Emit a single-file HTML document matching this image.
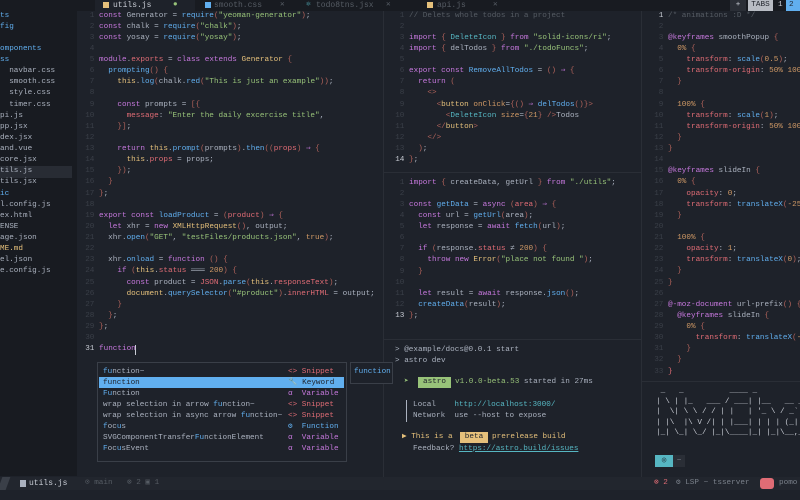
<!DOCTYPE html>
<html><head><meta charset="utf-8"><style>
*{margin:0;padding:0;box-sizing:border-box}
body{width:800px;height:500px;overflow:hidden;background:#1e222a;font-family:"Liberation Mono","DejaVu Sans Mono",monospace;font-size:7.67px;color:#abb2bf;position:relative}
.a{position:absolute;line-height:11px;white-space:nowrap}
pre{position:absolute;font:inherit;line-height:11.13px;white-space:pre}
.k{color:#c678dd}.f{color:#61afef}.s{color:#98c379}.r{color:#e06c75}.o{color:#d19a66}.y{color:#e5c07b}.c{color:#56b6c2}.p{color:#b0625a}.g{color:#565c64}.n{color:#3a3f48}.w{color:#c8ccd4}.b{color:#61afef}
.side{left:0;top:0;width:77px;height:476px;background:#181b21}
.clip{position:absolute;overflow:hidden}
</style></head><body>
<div class="a side"></div>
<div class="a" style="left:0;top:166px;width:72px;height:12px;background:#282c34"></div>
<pre style="left:0;top:10.5px;color:#abb2bf"><span class="b">ts
fig</span>

<span class="b">omponents
ss</span>
  navbar.css
  smooth.css
  style.css
  timer.css
pi.js
pp.jsx
dex.jsx
and.vue
core.jsx
tils.js
tils.jsx
<span class="b">ic</span>
l.config.js
ex.html
ENSE
age.json
<span class="y">ME.md</span>
el.json
e.config.js</pre>
<!-- tabline -->
<div class="a" style="left:77px;top:0;width:723px;height:11px;background:#181b21"></div>
<div class="a" style="left:95px;top:0;width:100px;height:11px;background:#1e222a"></div>
<div class="a" style="left:103px;top:2px;width:6px;height:6px;background:#e5c07b"></div>
<div class="a w" style="left:113px;top:0;font-size:8px">utils.js</div>
<div class="a s" style="left:173px;top:0">●</div>
<div class="a" style="left:205px;top:2px;width:6px;height:6px;background:#61afef"></div>
<div class="a g" style="left:214px;top:0;font-size:8px">smooth.css</div>
<div class="a g" style="left:280px;top:0">✕</div>
<div class="a c" style="left:306px;top:0">⚛</div>
<div class="a g" style="left:316px;top:0;font-size:8px">todo8tns.jsx</div>
<div class="a g" style="left:386px;top:0">✕</div>
<div class="a" style="left:427px;top:2px;width:6px;height:6px;background:#e5c07b"></div>
<div class="a g" style="left:437px;top:0;font-size:8px">api.js</div>
<div class="a g" style="left:493px;top:0">✕</div>
<div class="a" style="left:730px;top:0;width:16px;height:11px;background:#2a2e36;color:#c8ccd4;text-align:center">+</div>
<div class="a" style="left:748px;top:0;width:25px;height:11px;background:#b8bcc4;color:#1e222a;text-align:center">TABS</div>
<div class="a w" style="left:778px;top:0">1</div>
<div class="a" style="left:786px;top:0;width:14px;height:11px;background:#61afef;color:#1e222a;padding-left:3px">2</div>
<!-- splits -->
<div class="a" style="left:383px;top:11px;width:1px;height:466px;background:#2a2e36"></div>
<div class="a" style="left:641px;top:11px;width:1px;height:466px;background:#2a2e36"></div>
<div class="a" style="left:384px;top:172px;width:257px;height:1px;background:#2a2e36"></div>
<div class="a" style="left:384px;top:339px;width:257px;height:1px;background:#2a2e36"></div>
<div class="a" style="left:642px;top:381px;width:158px;height:1px;background:#2a2e36"></div>
<!-- main code -->
<pre style="left:80.6px;top:10.5px"><span class="n">  1</span> <span class="k">const</span> Generator = <span class="f">require</span><span class="p">(</span><span class="s">"yeoman-generator"</span><span class="p">)</span>;
<span class="n">  2</span> <span class="k">const</span> chalk = <span class="f">require</span><span class="p">(</span><span class="s">"chalk"</span><span class="p">)</span>;
<span class="n">  3</span> <span class="k">const</span> yosay = <span class="f">require</span><span class="p">(</span><span class="s">"yosay"</span><span class="p">)</span>;
<span class="n">  4</span>
<span class="n">  5</span> <span class="k">module</span>.<span class="r">exports</span> = <span class="k">class extends</span> <span class="y">Generator</span> <span class="p">{</span>
<span class="n">  6</span>   <span class="f">prompting</span><span class="p">()</span> <span class="p">{</span>
<span class="n">  7</span>     <span class="y">this</span>.<span class="f">log</span><span class="p">(</span>chalk.<span class="f">red</span><span class="p">(</span><span class="s">"This is just an example"</span><span class="p">))</span>;
<span class="n">  8</span>
<span class="n">  9</span>     <span class="k">const</span> prompts = <span class="p">[{</span>
<span class="n"> 10</span>       <span class="r">message</span>: <span class="s">"Enter the daily excercise title"</span>,
<span class="n"> 11</span>     <span class="p">}]</span>;
<span class="n"> 12</span>
<span class="n"> 13</span>     <span class="k">return</span> <span class="y">this</span>.<span class="f">prompt</span><span class="p">(</span>prompts<span class="p">)</span>.<span class="f">then</span><span class="p">((</span><span class="r">props</span><span class="p">)</span> <span class="k">⇒</span> <span class="p">{</span>
<span class="n"> 14</span>       <span class="y">this</span>.<span class="r">props</span> = props;
<span class="n"> 15</span>     <span class="p">})</span>;
<span class="n"> 16</span>   <span class="p">}</span>
<span class="n"> 17</span> <span class="p">}</span>;
<span class="n"> 18</span>
<span class="n"> 19</span> <span class="k">export const</span> <span class="f">loadProduct</span> = <span class="p">(</span><span class="r">product</span><span class="p">)</span> <span class="k">⇒</span> <span class="p">{</span>
<span class="n"> 20</span>   <span class="k">let</span> xhr = <span class="k">new</span> <span class="y">XMLHttpRequest</span><span class="p">()</span>, output;
<span class="n"> 21</span>   xhr.<span class="f">open</span><span class="p">(</span><span class="s">"GET"</span>, <span class="s">"testFiles/products.json"</span>, <span class="o">true</span><span class="p">)</span>;
<span class="n"> 22</span>
<span class="n"> 23</span>   xhr.<span class="f">onload</span> = <span class="k">function</span> <span class="p">()</span> <span class="p">{</span>
<span class="n"> 24</span>     <span class="k">if</span> <span class="p">(</span><span class="y">this</span>.<span class="r">status</span> ═══ <span class="o">200</span><span class="p">)</span> <span class="p">{</span>
<span class="n"> 25</span>       <span class="k">const</span> product = <span class="r">JSON</span>.<span class="f">parse</span><span class="p">(</span><span class="y">this</span>.<span class="r">responseText</span><span class="p">)</span>;
<span class="n"> 26</span>       <span class="y">document</span>.<span class="f">querySelector</span><span class="p">(</span><span class="s">"#product"</span><span class="p">)</span>.<span class="r">innerHTML</span> = output;
<span class="n"> 27</span>     <span class="p">}</span>
<span class="n"> 28</span>   <span class="p">}</span>;
<span class="n"> 29</span> <span class="p">}</span>;
<span class="n"> 30</span>
<span class="w"> 31</span> <span class="k">function</span></pre>
<div class="a" style="left:135px;top:345px;width:1px;height:10px;background:#c8ccd4"></div>
<!-- completion -->
<div class="a" style="left:97px;top:362px;width:250px;height:100px;border:1px solid #3a3f48;background:#1e222a"></div>
<div class="a" style="left:99px;top:377px;width:245px;height:11px;background:#61afef"></div>
<pre style="left:103px;top:366.5px"><span class="b">fu</span>nction~
<span style="color:#1e222a">function</span>
<span class="b">Fu</span>nction
wrap selection in arrow <span class="b">fu</span>nction~
wrap selection in async arrow <span class="b">fu</span>nction~
<span class="b">f</span>oc<span class="b">u</span>s
SVGComponentTransfer<span class="b">Fu</span>nctionElement
<span class="b">F</span>oc<span class="b">u</span>sEvent</pre>
<pre style="left:288px;top:366.5px"><span class="r">&lt;&gt; Snippet</span>
<span style="color:#1e222a">🔧 Keyword</span>
<span class="k">α  Variable</span>
<span class="r">&lt;&gt; Snippet</span>
<span class="r">&lt;&gt; Snippet</span>
<span class="f">⚙  Function</span>
<span class="k">α  Variable</span>
<span class="k">α  Variable</span></pre>
<div class="a f" style="left:350px;top:362px;width:43px;height:22px;border:1px solid #3a3f48;background:#1e222a;padding:4px 0 0 3px">function</div>
<!-- mid top -->
<pre style="left:395.2px;top:10.5px"><span class="n"> 1</span> <span class="g">// Delets whole todos in a project</span>
<span class="n"> 2</span>
<span class="n"> 3</span> <span class="k">import</span> <span class="p">{</span> <span class="c">DeleteIcon</span> <span class="p">}</span> <span class="k">from</span> <span class="s">"solid-icons/ri"</span>;
<span class="n"> 4</span> <span class="k">import</span> <span class="p">{</span> delTodos <span class="p">}</span> <span class="k">from</span> <span class="s">"./todoFuncs"</span>;
<span class="n"> 5</span>
<span class="n"> 6</span> <span class="k">export const</span> <span class="f">RemoveAllTodos</span> = <span class="p">()</span> <span class="k">⇒</span> <span class="p">{</span>
<span class="n"> 7</span>   <span class="k">return</span> <span class="p">(</span>
<span class="n"> 8</span>     <span class="p">&lt;&gt;</span>
<span class="n"> 9</span>       <span class="p">&lt;</span><span class="y">button</span> <span class="o">onClick</span>=<span class="p">{()</span> <span class="k">⇒</span> <span class="f">delTodos</span><span class="p">()}&gt;</span>
<span class="n">10</span>         <span class="p">&lt;</span><span class="c">DeleteIcon</span> <span class="o">size</span>=<span class="p">{</span><span class="o">21</span><span class="p">}</span> <span class="p">/&gt;</span>Todos
<span class="n">11</span>       <span class="p">&lt;/</span><span class="y">button</span><span class="p">&gt;</span>
<span class="n">12</span>     <span class="p">&lt;/&gt;</span>
<span class="n">13</span>   <span class="p">)</span>;
<span class="w">14</span> <span class="p">}</span>;</pre>
<!-- mid bottom -->
<pre style="left:395.2px;top:177.5px"><span class="n"> 1</span> <span class="k">import</span> <span class="p">{</span> createData, getUrl <span class="p">}</span> <span class="k">from</span> <span class="s">"./utils"</span>;
<span class="n"> 2</span>
<span class="n"> 3</span> <span class="k">const</span> <span class="f">getData</span> = <span class="k">async</span> <span class="p">(</span><span class="r">area</span><span class="p">)</span> <span class="k">⇒</span> <span class="p">{</span>
<span class="n"> 4</span>   <span class="k">const</span> url = <span class="f">getUrl</span><span class="p">(</span>area<span class="p">)</span>;
<span class="n"> 5</span>   <span class="k">let</span> response = <span class="k">await</span> <span class="f">fetch</span><span class="p">(</span>url<span class="p">)</span>;
<span class="n"> 6</span>
<span class="n"> 7</span>   <span class="k">if</span> <span class="p">(</span>response.<span class="r">status</span> ≠ <span class="o">200</span><span class="p">)</span> <span class="p">{</span>
<span class="n"> 8</span>     <span class="k">throw new</span> <span class="y">Error</span><span class="p">(</span><span class="s">"place not found "</span><span class="p">)</span>;
<span class="n"> 9</span>   <span class="p">}</span>
<span class="n">10</span>
<span class="n">11</span>   <span class="k">let</span> result = <span class="k">await</span> response.<span class="f">json</span><span class="p">()</span>;
<span class="n">12</span>   <span class="f">createData</span><span class="p">(</span>result<span class="p">)</span>;
<span class="w">13</span> <span class="p">}</span>;</pre>
<!-- terminal -->
<pre style="left:395px;top:344.5px;color:#abb2bf">&gt; @example/docs@0.0.1 start
&gt; astro dev</pre>
<div class="a s" style="left:404px;top:377px">➤</div>
<div class="a" style="left:418px;top:377px;width:33px;height:11px;background:#98c379;color:#1e222a;text-align:center">astro</div>
<div class="a s" style="left:455px;top:377px">v1.0.0-beta.53 <span style="color:#abb2bf">started in 27ms</span></div>
<div class="a" style="left:406px;top:400px;width:1px;height:22px;background:#abb2bf"></div>
<pre style="left:413px;top:399.5px">Local    <span class="c">http://localhost:3000/</span>
Network  use --host to expose</pre>
<div class="a y" style="left:402px;top:432px">▶ This is a</div>
<div class="a" style="left:460px;top:432px;width:28px;height:11px;background:#e5c07b;color:#1e222a;text-align:center">beta</div>
<div class="a y" style="left:492px;top:432px">prerelease build</div>
<div class="a" style="left:413px;top:444px">Feedback? <span class="c" style="text-decoration:underline">https://astro.build/issues</span></div>
<!-- right pane -->
<div class="clip" style="left:642px;top:0;width:158px;height:477px">
<pre style="left:12.2px;top:10.5px"><span class="w"> 1</span> <span class="g">/* animations :D */</span>
<span class="n"> 2</span>
<span class="n"> 3</span> <span class="k">@keyframes</span> smoothPopup <span class="p">{</span>
<span class="n"> 4</span>   <span class="o">0%</span> <span class="p">{</span>
<span class="n"> 5</span>     <span class="r">transform</span>: <span class="f">scale</span><span class="p">(</span><span class="o">0.5</span><span class="p">)</span>;
<span class="n"> 6</span>     <span class="r">transform-origin</span>: <span class="o">50% 100</span>
<span class="n"> 7</span>   <span class="p">}</span>
<span class="n"> 8</span>
<span class="n"> 9</span>   <span class="o">100%</span> <span class="p">{</span>
<span class="n">10</span>     <span class="r">transform</span>: <span class="f">scale</span><span class="p">(</span><span class="o">1</span><span class="p">)</span>;
<span class="n">11</span>     <span class="r">transform-origin</span>: <span class="o">50% 100</span>
<span class="n">12</span>   <span class="p">}</span>
<span class="n">13</span> <span class="p">}</span>
<span class="n">14</span>
<span class="n">15</span> <span class="k">@keyframes</span> slideIn <span class="p">{</span>
<span class="n">16</span>   <span class="o">0%</span> <span class="p">{</span>
<span class="n">17</span>     <span class="r">opacity</span>: <span class="o">0</span>;
<span class="n">18</span>     <span class="r">transform</span>: <span class="f">translateX</span><span class="p">(</span><span class="o">-25</span>
<span class="n">19</span>   <span class="p">}</span>
<span class="n">20</span>
<span class="n">21</span>   <span class="o">100%</span> <span class="p">{</span>
<span class="n">22</span>     <span class="r">opacity</span>: <span class="o">1</span>;
<span class="n">23</span>     <span class="r">transform</span>: <span class="f">translateX</span><span class="p">(</span><span class="o">0</span><span class="p">)</span>;
<span class="n">24</span>   <span class="p">}</span>
<span class="n">25</span> <span class="p">}</span>
<span class="n">26</span>
<span class="n">27</span> <span class="k">@-moz-document</span> url-prefix<span class="p">()</span> <span class="p">{</span>
<span class="n">28</span>   <span class="k">@keyframes</span> slideIn <span class="p">{</span>
<span class="n">29</span>     <span class="o">0%</span> <span class="p">{</span>
<span class="n">30</span>       <span class="r">transform</span>: <span class="f">translateX</span><span class="p">(</span><span class="o">-</span>
<span class="n">31</span>     <span class="p">}</span>
<span class="n">32</span>   <span class="p">}</span>
<span class="n">33</span> <span class="r">}</span></pre>
<pre style="left:14px;top:386px;color:#c8ccd4;line-height:10.5px"> _   _          ____ _                   
| \ | |_   ___ / ___| |__   __ _  ___| | __
|  \| \ \ / / | |   | '_ \ / _` |/ __| |/ /
| |\  |\ V /| | |___| | | | (_| | (__|   < 
|_| \_| \_/ |_|\____|_| |_|\__,_|\___|_|\_\</pre>
</div>
<div class="a" style="left:655px;top:455px;width:18px;height:12px;background:#56b6c2;color:#1e222a;text-align:center;line-height:12px">◎</div>
<div class="a" style="left:673px;top:455px;width:12px;height:12px;background:#2a2e36;color:#7a808a;text-align:center;line-height:12px">~</div>
<!-- statusline -->
<div class="a" style="left:0;top:477px;width:800px;height:13px;background:#22262e"></div>
<div class="a" style="left:0;top:477px;width:8px;height:13px;background:#3a3f48;transform:skewX(-20deg)"></div>
<div class="a" style="left:20px;top:480px;width:6px;height:7px;background:#abb2bf"></div>
<div class="a w" style="left:29px;top:478px;font-size:8px">utils.js</div>
<div class="a g" style="left:85px;top:478px">⊙ main</div>
<div class="a g" style="left:127px;top:478px">⊗ 2 ▣ 1</div>
<div class="a r" style="left:654px;top:478px">⊗ 2</div>
<div class="a" style="left:676px;top:478px;color:#7a808a">⚙ LSP ~ tsserver</div>
<div class="a" style="left:760px;top:478px;width:14px;height:11px;background:#e06c75;border-radius:3px"></div>
<div class="a" style="left:779px;top:478px;color:#7a808a">pomo</div>
</body></html>
